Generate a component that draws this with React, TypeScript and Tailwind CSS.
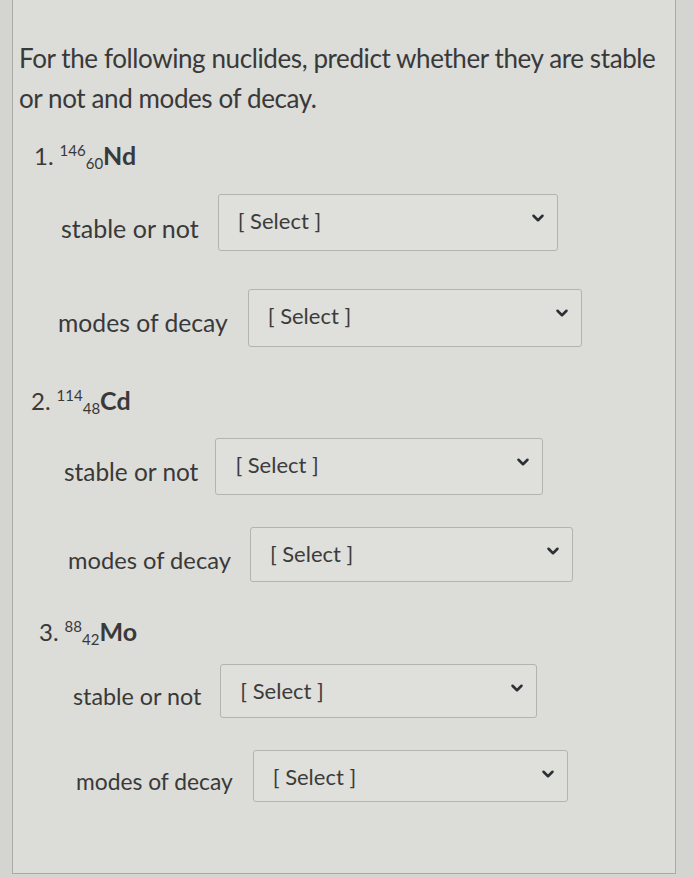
import { ChevronDown } from "lucide-react";

type Row = {
  label: string;
  size: string;
  pl: string;
  gap: string;
  w: string;
  h: string;
  mt: string;
};

type Nuclide = {
  n: number;
  mass: string;
  z: string;
  sym: string;
  pl: string;
  mt: string;
  rows: Row[];
};

const nuclides: Nuclide[] = [
  {
    n: 1,
    mass: "146",
    z: "60",
    sym: "Nd",
    pl: "pl-[21px]",
    mt: "mt-[22px]",
    rows: [
      { label: "stable or not", size: "text-[25px]", pl: "pl-[48px]", gap: "gap-[19px]", w: "w-[340px]", h: "h-[57px]", mt: "mt-[20px]" },
      { label: "modes of decay", size: "text-[24.7px]", pl: "pl-[45px]", gap: "gap-[20px]", w: "w-[334px]", h: "h-[58px]", mt: "mt-[38px]" },
    ],
  },
  {
    n: 2,
    mass: "114",
    z: "48",
    sym: "Cd",
    pl: "pl-[18px]",
    mt: "mt-[38px]",
    rows: [
      { label: "stable or not", size: "text-[24.4px]", pl: "pl-[51px]", gap: "gap-[17px]", w: "w-[328px]", h: "h-[57px]", mt: "mt-[19px]" },
      { label: "modes of decay", size: "text-[23.7px]", pl: "pl-[55px]", gap: "gap-[19px]", w: "w-[323px]", h: "h-[55px]", mt: "mt-[32px]" },
    ],
  },
  {
    n: 3,
    mass: "88",
    z: "42",
    sym: "Mo",
    pl: "pl-[26px]",
    mt: "mt-[34px]",
    rows: [
      { label: "stable or not", size: "text-[23.3px]", pl: "pl-[60px]", gap: "gap-[19px]", w: "w-[317px]", h: "h-[54px]", mt: "mt-[14px]" },
      { label: "modes of decay", size: "text-[22.8px]", pl: "pl-[63px]", gap: "gap-[20px]", w: "w-[315px]", h: "h-[52px]", mt: "mt-[32px]" },
    ],
  },
];

function SelectBox({ w, h }: { w: string; h: string }) {
  return (
    <div
      className={`${w} ${h} flex items-start justify-between rounded-[3px] border border-[#b3b3b0] bg-[#dfdfdb] pl-[19px] pr-[10px] pt-[12px]`}
    >
      <span className="text-[22px] leading-[28px] text-[#3c3c3c]">[ Select ]</span>
      <ChevronDown className="mt-[2px] h-[18px] w-[18px] text-[#2b3035]" strokeWidth={3.4} />
    </div>
  );
}

export default function App() {
  return (
    <div
      className="min-h-[878px] w-[694px] bg-[#d4d4d1]"
      style={{ fontFamily: "Lato, 'Open Sans', sans-serif" }}
    >
      <div className="ml-[12px] mr-[18px] h-[874px] border-x border-b border-[#a9a9a6] bg-[#dcdcd8] pt-[38px] text-[#393939]">
        {/* Question */}
        <p className="pl-[6px] text-[26px] leading-[40px] tracking-[-0.4px]">
          For the following nuclides, predict whether they are stable
          <br />
          or not and modes of decay.
        </p>

        {nuclides.map((item) => (
          <div key={item.n}>
            <div className={`${item.pl} ${item.mt} flex items-baseline text-[24px] leading-[30px]`}>
              <span>{item.n}.</span>
              <span className="relative -top-[9px] ml-[6px] text-[15px]">{item.mass}</span>
              <span className="relative top-[4px] text-[15px]">{item.z}</span>
              <span className="text-[25px] font-bold">{item.sym}</span>
            </div>

            {item.rows.map((row) => (
              <div key={row.label} className={`${row.pl} ${row.gap} ${row.mt} flex items-center`}>
                <span className={`${row.size} mt-[10px] leading-[30px]`}>{row.label}</span>
                <SelectBox w={row.w} h={row.h} />
              </div>
            ))}
          </div>
        ))}
      </div>
    </div>
  );
}
